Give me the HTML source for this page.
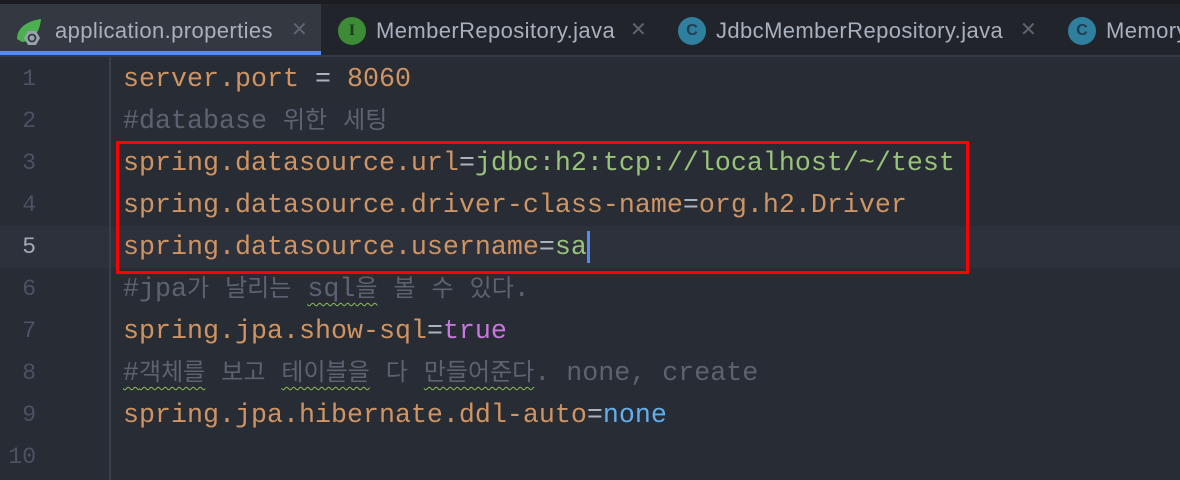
<!DOCTYPE html>
<html><head><meta charset="utf-8"><style>
*{margin:0;padding:0;box-sizing:border-box}
body{width:1180px;height:480px;background:#282c34;overflow:hidden;position:relative;font-family:"Liberation Mono",monospace}
.top{position:absolute;left:0;top:0;width:1180px;height:4px;background:#1b1d23}
.tabs{position:absolute;left:0;top:4px;width:1180px;height:53px;background:#21252b;border-bottom:2px solid #343943;overflow:hidden}
.act{position:absolute;left:0;top:0;width:321px;height:53px;background:#333841;border-bottom:6px solid #568af2}
.tt{position:absolute;top:14px;font:22px "Liberation Sans",sans-serif;letter-spacing:0.4px;color:#a9b0bd;white-space:nowrap}
.x{position:absolute;top:13px;font:20px "Liberation Sans",sans-serif;color:#5f6570}
.ic{position:absolute;top:13px;width:28px;height:28px;border-radius:50%;font:bold 16px "Liberation Sans",sans-serif;text-align:center;line-height:28px}
.gl{position:absolute;left:109px;top:57px;width:2px;height:423px;background:#3a3f4a}
.hl{position:absolute;left:0;top:226px;width:1180px;height:42px;background:#2c313c}
.ln{position:absolute;left:0;width:36px;text-align:right;font-size:23px;color:#4b5263;line-height:42px}
.cd{position:absolute;left:123px;font-size:26.67px;line-height:42px;height:42px;color:#cf9462;white-space:pre}
.k{font-family:"Noto Sans CJK KR",sans-serif;font-size:24px;line-height:1}
.c{color:#5c6370}.g{color:#98c379}.e{color:#abb2bf}.p{color:#c678dd}.b{color:#61afef}
.w{text-decoration:underline wavy #8fbf5a;text-decoration-thickness:1px;text-underline-offset:6px}
.box{position:absolute;left:116px;top:141px;width:853px;height:133px;border:3px solid #f00}
.cur{position:absolute;left:587px;top:231px;width:3px;height:32px;background:#568af2}
</style></head><body>
<div class="top"></div>
<div class="tabs">
<div class="act"></div>
<svg style="position:absolute;left:14px;top:11px" width="32" height="32" viewBox="0 0 32 32"><path d="M3 24 C3 12 14 6 27 4 C26 16 20 26 8 27 Z" fill="#4caf50"/><polygon points="14,16 22,16 26,23 22,30 14,30 10,23" fill="#9aa3ad"/><circle cx="18" cy="23" r="3.5" fill="none" stroke="#333841" stroke-width="1.8"/></svg>
<div class="tt" style="left:55px">application.properties</div><div class="x" style="left:291px">✕</div>
<div class="ic" style="left:338px;background:#3d8b37;color:#1d3b1b;font-family:'Liberation Serif',serif">I</div>
<div class="tt" style="left:376px">MemberRepository.java</div><div class="x" style="left:630px">✕</div>
<div class="ic" style="left:678px;background:#2f7f9f;color:#1e3f4f">C</div>
<div class="tt" style="left:716px">JdbcMemberRepository.java</div><div class="x" style="left:1020px">✕</div>
<div class="ic" style="left:1068px;background:#2f7f9f;color:#1e3f4f">C</div>
<div class="tt" style="left:1106px">MemoryMemberRepository.java</div>
</div>
<div class="hl"></div>
<div class="gl"></div>
<div class="ln" style="top:58px">1</div><div class="ln" style="top:100px">2</div><div class="ln" style="top:142px">3</div><div class="ln" style="top:184px">4</div><div class="ln" style="top:226px;color:#a3abb8">5</div><div class="ln" style="top:268px">6</div><div class="ln" style="top:310px">7</div><div class="ln" style="top:352px">8</div><div class="ln" style="top:394px">9</div><div class="ln" style="top:436px">10</div>
<div class="cd" style="top:59px">server.port <span class="e">=</span> 8060</div>
<div class="cd c" style="top:101px">#database <span class="k">위한</span> <span class="k">세팅</span></div>
<div class="cd" style="top:143px">spring.datasource.url<span class="e">=</span><span class="g">jdbc:h2:tcp://localhost/~/test</span></div>
<div class="cd" style="top:185px">spring.datasource.driver-class-name<span class="e">=</span>org.h2.Driver</div>
<div class="cd" style="top:227px">spring.datasource.username<span class="e">=</span><span class="g">sa</span></div>
<div class="cd c" style="top:269px">#jpa<span class="k">가</span> <span class="k">날리는</span> <span class="w">sql<span class="k">을</span></span> <span class="k">볼</span> <span class="k">수</span> <span class="k">있다</span>.</div>
<div class="cd" style="top:311px">spring.jpa.show-sql<span class="e">=</span><span class="p">true</span></div>
<div class="cd c" style="top:353px"><span class="w">#<span class="k">객체를</span></span> <span class="k">보고</span> <span class="w"><span class="k">테이블을</span></span> <span class="k">다</span> <span class="w"><span class="k">만들어준다</span></span>. none, create</div>
<div class="cd" style="top:395px">spring.jpa.hibernate.ddl-auto<span class="e">=</span><span class="b">none</span></div>
<div class="box"></div>
<div class="cur"></div>
</body></html>
